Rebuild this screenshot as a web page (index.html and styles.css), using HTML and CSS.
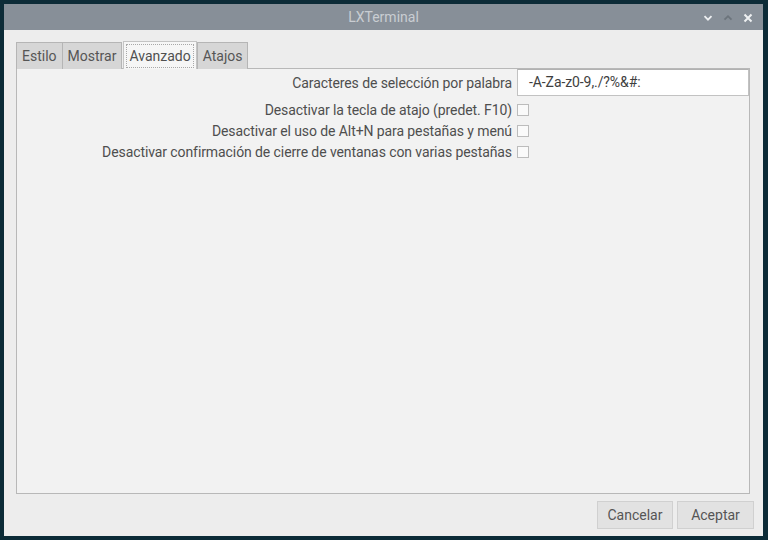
FILE: index.html
```html
<!DOCTYPE html>
<html lang="es">
<head>
<meta charset="utf-8">
<title>LXTerminal</title>
<link rel="stylesheet" href="styles.css">
</head>
<body>
<div class="window">
  <div class="titlebar">
    <span class="title">LXTerminal</span>
    <div class="controls">
      <svg class="ctl" width="10" height="10" viewBox="0 0 10 10"><path d="M1.5 3.2 L5 6.7 L8.5 3.2" fill="none" stroke="#eef0f2" stroke-width="1.8"/></svg>
      <svg class="ctl" width="10" height="10" viewBox="0 0 10 10"><path d="M1.5 6.7 L5 3.2 L8.5 6.7" fill="none" stroke="#6c747c" stroke-width="1.8"/></svg>
      <svg class="ctl" width="10" height="10" viewBox="0 0 10 10"><path d="M1.5 1.5 L8.5 8.5 M8.5 1.5 L1.5 8.5" fill="none" stroke="#eef0f2" stroke-width="2"/></svg>
    </div>
  </div>
  <div class="content">
    <div class="notebook">
      <div class="tabs">
        <div class="tab">Estilo</div>
        <div class="tab">Mostrar</div>
        <div class="tab active"><span class="focus">Avanzado</span></div>
        <div class="tab">Atajos</div>
      </div>
      <div class="panel">
        <div class="form">
          <label class="lbl first">Caracteres de selección por palabra</label>
          <div class="entry">-A-Za-z0-9,./?%&amp;#:</div>
          <label class="lbl">Desactivar la tecla de atajo (predet. F10)</label>
          <div class="cell"><span class="check"></span></div>
          <label class="lbl">Desactivar el uso de Alt+N para pestañas y menú</label>
          <div class="cell"><span class="check"></span></div>
          <label class="lbl">Desactivar confirmación de cierre de ventanas con varias pestañas</label>
          <div class="cell"><span class="check"></span></div>
        </div>
      </div>
    </div>
    <div class="buttons">
      <button class="btn cancel">Cancelar</button>
      <button class="btn ok">Aceptar</button>
    </div>
  </div>
</div>
</body>
</html>
```

FILE: styles.css
```css
html, body {
  margin: 0;
  padding: 0;
}
body {
  width: 768px;
  height: 540px;
  background: #0c2b37;
  font-family: Roboto, "Liberation Sans", sans-serif;
  font-size: 14px;
  color: #4e4e4e;
  overflow: hidden;
}
.window {
  margin: 4px 0 0 4px;
  width: 759px;
  height: 532px;
  display: flex;
  flex-direction: column;
  background: #ededed;
}
.titlebar {
  height: 26px;
  flex: 0 0 26px;
  background: #878f98;
  position: relative;
  display: flex;
  align-items: center;
  justify-content: center;
}
.title {
  color: #c9cdd2;
  font-size: 14px;
}
.controls {
  position: absolute;
  right: 10px;
  top: 9px;
  display: flex;
  gap: 10px;
}
.ctl {
  display: block;
}
.content {
  flex: 1;
  display: flex;
  flex-direction: column;
  padding: 11px 13px 0 12px;
}
.notebook {
  flex: 1;
  display: flex;
  flex-direction: column;
}
.tabs {
  display: flex;
  height: 28px;
  align-items: flex-end;
  position: relative;
  z-index: 1;
}
.tab {
  height: 27px;
  box-sizing: border-box;
  border: 1px solid #b5b5b5;
  border-bottom: none;
  background: #d6d6d6;
  padding: 0 5px;
  line-height: 26px;
  color: #555;
  margin-right: 0;
}
.tab + .tab {
  border-left: none;
}
.tab.active {
  height: 28px;
  background: #f6f6f6;
  border-left: 1px solid #c4c4c4;
  border-color: #c4c4c4;
  margin-left: 1px;
  padding: 2px 2px 0;
  line-height: 22px;
}
.tab.active + .tab {
  border-left: 1px solid #b5b5b5;
}
.focus {
  display: block;
  border: 1px dotted #a8a8a8;
  padding: 0 2px;
  height: 22px;
  color: #505050;
}
.panel {
  flex: 1;
  border: 1px solid #b8b8b8;
  background: #f2f2f2;
  margin-top: -1px;
}
.form {
  display: grid;
  grid-template-columns: 1fr 232px;
  grid-template-rows: 30px 21px 21px 21px;
  column-gap: 5px;
  align-items: center;
}
.lbl {
  text-align: right;
  white-space: nowrap;
  color: #4e4e4e;
  letter-spacing: -0.09px;
}
.lbl.first {
  align-self: start;
  line-height: 28px;
}
.entry {
  align-self: start;
  height: 27px;
  box-sizing: border-box;
  background: #ffffff;
  border: 1px solid #c2c2c2;
  border-top-color: #b2b2b2;
  padding-left: 11px;
  line-height: 25px;
  color: #3e3e3e;
  letter-spacing: -0.09px;
}
.cell {
  display: flex;
  align-items: center;
}
.check {
  display: block;
  width: 12px;
  height: 12px;
  box-sizing: border-box;
  border: 1px solid #bcbcbc;
  background: #fafafa;
}
.buttons {
  display: flex;
  justify-content: flex-end;
  gap: 4px;
  padding: 7px 0 7px 0;
  margin-right: -4px;
}
.btn {
  font-family: Roboto, "Liberation Sans", sans-serif;
  font-size: 14px;
  color: #555;
  background: #e2e2e2;
  border: 1px solid #d0d0d0;
  height: 28px;
  padding: 0;
  border-radius: 0;
}
.btn.cancel {
  width: 76px;
}
.btn.ok {
  width: 77px;
}
```
